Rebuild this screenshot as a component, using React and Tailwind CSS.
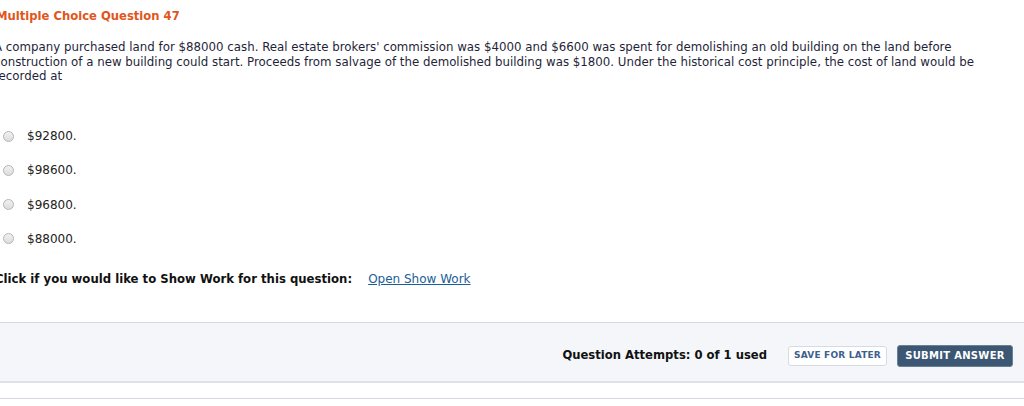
export default function App() {
  const options = ["$92800.", "$98600.", "$96800.", "$88000."];

  return (
    <div className="w-[1024px] h-[406px] bg-white overflow-hidden font-['DejaVu_Sans',Verdana,sans-serif] text-[12px] text-[#222]">
      {/* Question body */}
      <div className="-ml-[6px]">
        <h2 className="pt-[8px] text-[11.6px] font-bold text-[#e0561b] leading-[16px] ml-[2px]">
          Multiple Choice Question 47
        </h2>
        <p className="mt-[16px] text-[11.8px] leading-[14.5px] text-[#1f1f3a] whitespace-nowrap">
          A company purchased land for $88000 cash. Real estate brokers' commission was $4000 and $6600 was spent for demolishing an old building on the land before
          <br />
          construction of a new building could start. Proceeds from salvage of the demolished building was $1800. Under the historical cost principle, the cost of land would be
          <br />
          recorded at
        </p>
      </div>

      {/* Answer choices */}
      <ul className="mt-[46px] flex flex-col gap-[21.3px]">
        {options.map((o) => (
          <li key={o} className="flex items-center h-[13px] pl-[3px]">
            <span className="w-[11px] h-[11px] rounded-full border border-[#b5b5b5] bg-gradient-to-b from-[#f2f2f2] to-[#dcdcdc]" />
            <span className="ml-[13px] text-[#222]">{o}</span>
          </li>
        ))}
      </ul>

      {/* Show work */}
      <div className="-ml-[5px] mt-[25px] flex items-center">
        <span className="font-bold text-[11.7px] text-[#111]">Click if you would like to Show Work for this question:</span>
        <a href="#" className="ml-[16px] text-[#1b5d97] underline">
          Open Show Work
        </a>
      </div>

      {/* Footer bar */}
      <div className="mt-[34px] h-[61px] border-t border-[#d3d9e3] border-b-2 border-b-[#dde2ea] bg-[#f4f6f9] flex items-center justify-end pr-[11px] pt-[7px]">
        <span className="font-bold text-[11.6px] text-[#111]">Question Attempts: 0 of 1 used</span>
        <button className="ml-[21px] h-[20px] px-[5px] rounded-[3px] border border-[#d6dbe3] bg-white text-[9px] font-bold text-[#3c5f8e] tracking-[0.2px]">
          SAVE FOR LATER
        </button>
        <button className="ml-[10px] h-[22px] w-[116px] rounded-[3px] border border-[#6b7f95] bg-[#3b5773] text-[10px] font-bold text-white tracking-[0.3px]">
          SUBMIT ANSWER
        </button>
      </div>
      <div className="mt-[15px] border-t border-[#d3d9e3]" />
    </div>
  );
}
